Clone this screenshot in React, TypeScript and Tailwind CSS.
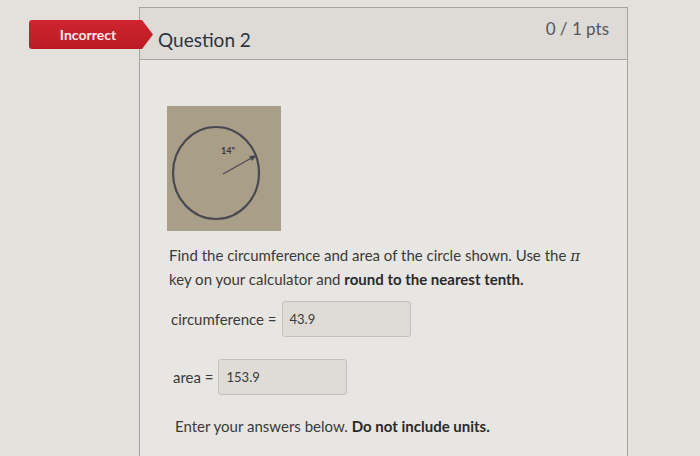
import React from "react";

export default function App() {
  return (
    <div
      className="relative w-[700px] h-[456px] overflow-hidden bg-[#e4e1dc]"
      style={{ fontFamily: "Lato, 'Open Sans', sans-serif" }}
    >
      <div className="ml-[139px] mt-[7px] w-[489px] h-[470px] border border-[#a6a4a0] bg-[#e8e6e2]">
        <div className="h-[52px] border-b border-[#a6a4a0] bg-[#dedbd6] flex justify-between px-[18px]">
          <div className="pt-[22px] text-[19px] text-[#2d3340] leading-none">Question 2</div>
          <div className="pt-[12px] text-[17px] text-[#55575a] leading-none">0 / 1 pts</div>
        </div>
        <div className="pl-[27px] pt-[46px]">
          <div className="w-[114px] h-[125px] bg-[#a99f89]">
            <svg width="114" height="125" viewBox="0 0 114 125">
              <ellipse cx="49" cy="67" rx="43" ry="46" fill="none" stroke="#4a4850" strokeWidth="2.2" />
              <line x1="56" y1="68" x2="88" y2="50" stroke="#4a4850" strokeWidth="1.2" />
              <path d="M82 50 L90 49 L85 55 Z" fill="#4a4850" />
              <text x="54" y="48" fontSize="9" fill="#3a3838" fontFamily="Lato, sans-serif" fontWeight="bold">14"</text>
            </svg>
          </div>
          <div className="mt-[13px] pl-[2px] text-[15px] leading-[23px] text-[#3a3a3a]">
            <p>Find the circumference and area of the circle shown. Use the <span className="italic" style={{ fontFamily: "'DejaVu Serif', serif" }}>π</span></p>
            <p>key on your calculator and <span className="font-bold text-[#2a2a2a]">round to the nearest tenth.</span></p>
          </div>
          <div className="mt-[10px] flex items-center pl-[4px] text-[15px] text-[#3a3a3a]">
            <span>circumference =</span>
            <div className="ml-[5px] w-[129px] h-[36px] rounded-[3px] border border-[#c5c2bd] bg-[#dfdcd7] pl-[7px] pt-[11px] text-[13px] leading-none">43.9</div>
          </div>
          <div className="mt-[22px] flex items-center pl-[6px] text-[15px] text-[#3a3a3a]">
            <span>area =</span>
            <div className="ml-[4px] w-[129px] h-[36px] rounded-[3px] border border-[#c5c2bd] bg-[#dfdcd7] pl-[8px] pt-[11px] text-[13px] leading-none">153.9</div>
          </div>
          <div className="mt-[20px] pl-[8px] text-[15px] text-[#3a3a3a]">
            Enter your answers below. <span className="font-bold text-[#2a2a2a]">Do not include units.</span>
          </div>
        </div>
      </div>
      <div className="absolute left-[29px] top-[20px] w-[124px] h-[29px] flex items-center">
        <svg className="absolute inset-0" width="124" height="29" viewBox="0 0 124 29">
          <defs>
            <linearGradient id="rg" x1="0" y1="0" x2="0" y2="1">
              <stop offset="0" stopColor="#d0242f" />
              <stop offset="1" stopColor="#bb1b26" />
            </linearGradient>
          </defs>
          <path d="M3 0 H113 L124 14.5 L113 29 H3 Q0 29 0 26 V3 Q0 0 3 0 Z" fill="url(#rg)" />
        </svg>
        <span className="relative w-[118px] text-center text-[14px] font-bold text-[#fbe9ea] leading-none">Incorrect</span>
      </div>
    </div>
  );
}
